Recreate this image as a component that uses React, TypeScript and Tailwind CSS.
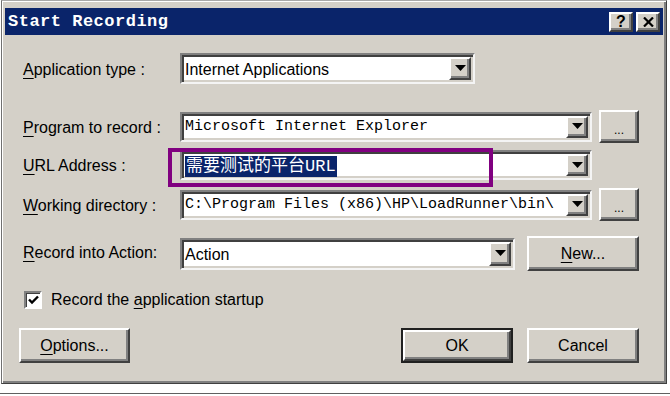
import type { ReactNode } from "react";

const UI_FONT = { fontFamily: '"Liberation Sans", Arial, sans-serif' };
const MONO_FONT = { fontFamily: '"Liberation Mono", "Courier New", monospace' };

function Arrow() {
  return (
    <svg width="11" height="6" viewBox="0 0 11 6">
      <polygon points="0,0 11,0 5.5,6" fill="#000" />
    </svg>
  );
}

function Raised({
  children,
  className = "",
  isDefault = false,
}: {
  children: ReactNode;
  className?: string;
  isDefault?: boolean;
}) {
  const inner = (
    <div
      className={`flex h-full w-full items-center justify-center bg-[#d4d0c8] border-2 border-t-white border-l-white border-r-[#404040] border-b-[#404040] shadow-[inset_-2px_-2px_0_#808080] ${isDefault ? "" : className}`}
    >
      {children}
    </div>
  );
  if (!isDefault) return inner;
  return <div className={`border-2 border-[#202020] ${className}`}>{inner}</div>;
}

function Combo({
  width,
  children,
  height = "h-[30px]",
}: {
  width: string;
  children?: ReactNode;
  height?: string;
}) {
  return (
    <div
      className={`${width} ${height} flex bg-white border-2 border-t-[#808080] border-l-[#808080] border-r-[#f4f4f4] border-b-[#f4f4f4] shadow-[inset_2px_2px_0_#404040,inset_-2px_-2px_0_#d4d0c8]`}
    >
      <div className="flex flex-1 items-center overflow-hidden pl-[3px] pt-[2px]">
        {children}
      </div>
      <div className="w-[24px] py-[2px] pr-[2px]">
        <Raised className="pb-[1px]">
          <Arrow />
        </Raised>
      </div>
    </div>
  );
}

function Label({ first, rest }: { first: string; rest: string }) {
  return (
    <div className="w-[157px] pt-[2px] text-[16px] text-black" style={UI_FONT}>
      <span className="underline underline-offset-[3px] decoration-1">{first}</span>
      {rest}
    </div>
  );
}

function Browse() {
  return (
    <div className="ml-[7px] h-[33px] w-[40px]">
      <Raised className="items-end pb-[5px]">
        <span className="text-[12px] leading-none" style={UI_FONT}>
          ...
        </span>
      </Raised>
    </div>
  );
}

export default function App() {
  return (
    <div className="relative h-[396px] w-[670px] overflow-hidden bg-white">
      <div className="ml-px h-[384px] w-[666px] border border-t-[#a8a8a8] border-l-[#707070] border-r-[#404040] border-b-[#404040] bg-[#d4d0c8] px-[3px] pt-[7px] shadow-[inset_1px_1px_0_#ffffff,inset_-2px_-2px_0_#808080]">
        {/* Title bar */}
        <div className="flex h-[27px] items-center bg-[#0a246a] pl-[3px] pr-[3px]">
          <span
            className="flex-1 text-[17px] font-bold tracking-[0.5px] text-white"
            style={{ fontFamily: '"Liberation Mono", "Noto Sans CJK SC", monospace' }}
          >
            Start Recording
          </span>
          <div className="h-[20px] w-[24px]">
            <Raised>
              <span className="text-[16px] font-bold leading-none" style={UI_FONT}>
                ?
              </span>
            </Raised>
          </div>
          <div className="ml-[3px] h-[20px] w-[24px]">
            <Raised>
              <svg width="11" height="10" viewBox="0 0 11 10">
                <path d="M1 0.5 L10 9.5 M10 0.5 L1 9.5" stroke="#000" strokeWidth="2.2" />
              </svg>
            </Raised>
          </div>
        </div>

        {/* Body */}
        <div className="pl-[18px]">
          <div className="mt-[18px] flex items-center">
            <Label first="A" rest="pplication type :" />
            <Combo width="w-[295px]" height="h-[31px]">
              <span className="text-[16px]" style={UI_FONT}>
                Internet Applications
              </span>
            </Combo>
          </div>

          <div className="mt-[26px] flex items-center">
            <Label first="P" rest="rogram to record :" />
            <Combo width="w-[412px]">
              <span className="text-[15px]" style={MONO_FONT}>
                Microsoft Internet Explorer
              </span>
            </Combo>
            <Browse />
          </div>

          <div className="mt-[7px] flex items-center">
            <Label first="U" rest="RL Address :" />
            <Combo width="w-[412px]">
              <span
                className="bg-[#0a246a] px-px text-[17px] leading-[21px] text-white"
                style={{ fontFamily: '"Liberation Mono", "Noto Sans CJK SC", monospace' }}
              >
                需要测试的平台URL
              </span>
            </Combo>
          </div>

          <div className="mt-[8px] flex items-center">
            <Label first="W" rest="orking directory :" />
            <Combo width="w-[412px]">
              <span className="whitespace-nowrap text-[15px]" style={MONO_FONT}>
                C:\Program Files (x86)\HP\LoadRunner\bin\
              </span>
            </Combo>
            <Browse />
          </div>

          <div className="mt-[15px] flex items-center">
            <div className="w-[157px] -mt-[2px] text-[16px] text-black" style={UI_FONT}>
              <span className="underline underline-offset-[3px] decoration-1">R</span>ecord into Action:
            </div>
            <Combo width="w-[335px]" height="h-[32px]">
              <span className="text-[16px]" style={UI_FONT}>
                Action
              </span>
            </Combo>
            <div className="ml-[12px] h-[35px] w-[112px]">
              <Raised>
                <span className="text-[16px]" style={UI_FONT}>
                  <span className="underline underline-offset-[3px] decoration-1">N</span>ew...
                </span>
              </Raised>
            </div>
          </div>

          <div className="mt-[20px] flex h-[18px] items-center">
            <div className="ml-px flex h-[18px] w-[18px] items-center justify-center bg-white border-2 border-t-[#808080] border-l-[#808080] border-r-white border-b-white shadow-[inset_1px_1px_0_#404040]">
              <svg width="11" height="10" viewBox="0 0 11 10">
                <path d="M1 4.5 L4 7.5 L10 1.5" fill="none" stroke="#000" strokeWidth="2.4" />
              </svg>
            </div>
            <span className="ml-[9px] text-[16px] leading-[18px]" style={UI_FONT}>
              Record the <span className="underline underline-offset-[3px] decoration-1">a</span>pplication startup
            </span>
          </div>

          <div className="-ml-[4px] mt-[19px] flex items-center">
            <div className="h-[35px] w-[111px]">
              <Raised>
                <span className="text-[16px]" style={UI_FONT}>
                  <span className="underline underline-offset-[3px] decoration-1">O</span>ptions...
                </span>
              </Raised>
            </div>
            <div className="ml-[271px] h-[35px] w-[112px]">
              <Raised isDefault className="h-full w-full">
                <span className="text-[16px]" style={UI_FONT}>
                  OK
                </span>
              </Raised>
            </div>
            <div className="ml-[14px] h-[35px] w-[112px]">
              <Raised>
                <span className="text-[16px]" style={UI_FONT}>
                  Cancel
                </span>
              </Raised>
            </div>
          </div>
        </div>
      </div>

      {/* bottom strip line */}
      <div className="mt-[9px] h-px w-full bg-[#606060]" />

      {/* highlight box drawn over the URL field */}
      <div className="absolute left-[168px] top-[148px] h-[39px] w-[325px] border-4 border-[#800080]" />
    </div>
  );
}
